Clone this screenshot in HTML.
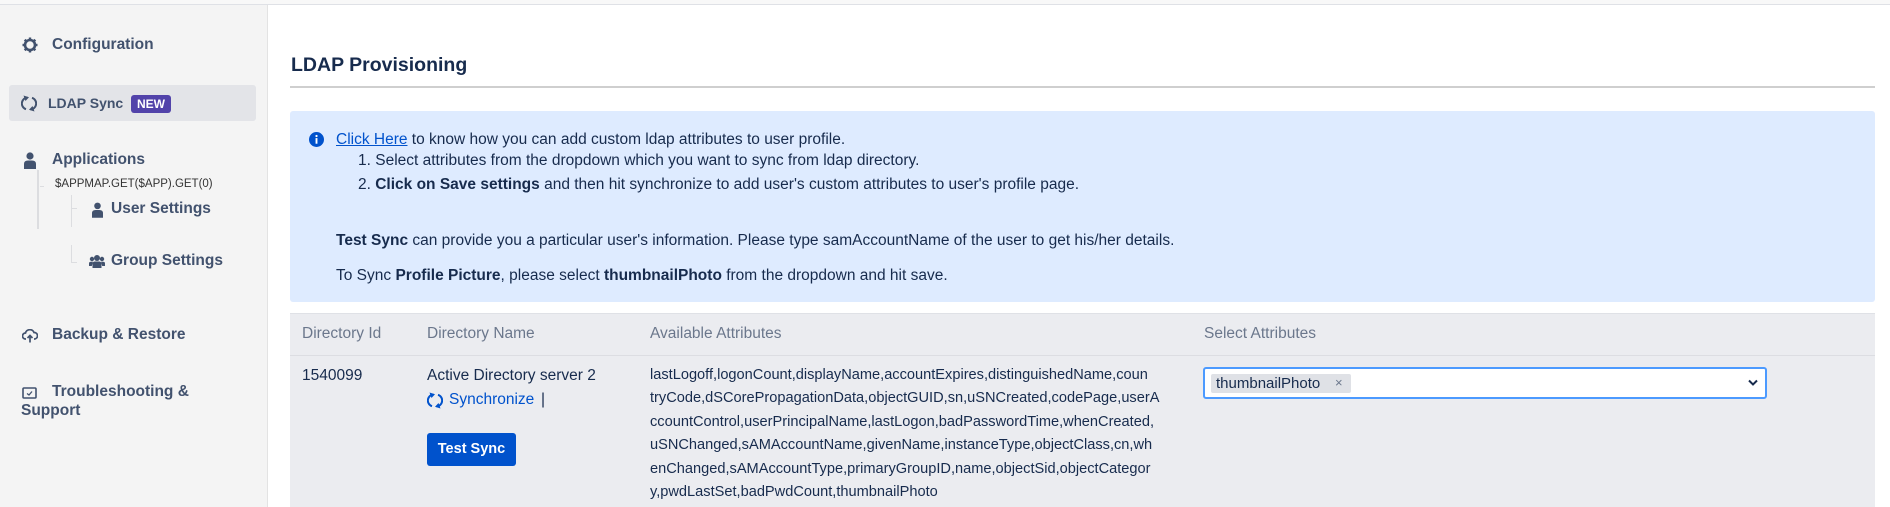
<!DOCTYPE html>
<html><head><meta charset="utf-8"><style>
*{margin:0;padding:0;box-sizing:border-box}
body{width:1890px;height:507px;overflow:hidden;background:#fff;font-family:"Liberation Sans",sans-serif;color:#172b4d;position:relative}
.a{position:absolute;white-space:nowrap}
.sb{position:absolute;left:0;top:0;width:268px;height:507px;background:#f4f4f4;border-right:1px solid #e3e3e3}
.top{position:absolute;left:0;top:0;width:1890px;height:5px;border-bottom:1px solid #dfe1e6;background:#f8f8f8}
.nav{font-weight:bold;font-size:15.5px;color:#42526e}
.ln{position:absolute;background:#dcdde0}
.t{font-size:15.5px;color:#172b4d}
.attr{font-size:14.6px;line-height:23.4px;color:#172b4d}
</style></head><body>
<div class="sb"></div>
<div class="top"></div>

<svg class="a" style="left:22px;top:37px" width="16" height="16" viewBox="0 0 16 16"><circle cx="8" cy="8" r="5" fill="none" stroke="#42526e" stroke-width="2.6"/><g stroke="#42526e" stroke-width="2.4"><line x1="8" y1="0.5" x2="8" y2="3"/><line x1="8" y1="13" x2="8" y2="15.5"/><line x1="0.5" y1="8" x2="3" y2="8"/><line x1="13" y1="8" x2="15.5" y2="8"/><line x1="2.7" y1="2.7" x2="4.4" y2="4.4"/><line x1="11.6" y1="11.6" x2="13.3" y2="13.3"/><line x1="2.7" y1="13.3" x2="4.4" y2="11.6"/><line x1="11.6" y1="4.4" x2="13.3" y2="2.7"/></g></svg>
<div class="a nav" style="left:52px;top:36px">Configuration</div>

<div class="a" style="left:9px;top:85px;width:247px;height:36px;background:#e3e4e8;border-radius:3px"></div>
<svg class="a" style="left:21px;top:95px" width="16" height="17" viewBox="0 0 16 17"><path d="M6.5 2.5 A6 6 0 0 0 5 14.2" fill="none" stroke="#42526e" stroke-width="2"/><path d="M9.5 14.5 A6 6 0 0 0 11 2.8" fill="none" stroke="#42526e" stroke-width="2"/><path d="M2.5 0.5 L8 2.3 L4.5 6Z" fill="#42526e"/><path d="M13.5 16.5 L8 14.7 L11.5 11Z" fill="#42526e"/></svg>
<div class="a nav" style="left:48px;top:95px;font-size:14px">LDAP Sync</div>
<div class="a" style="left:131px;top:95px;width:40px;height:18px;background:#5243aa;border-radius:3px;color:#fff;font-weight:bold;font-size:12px;line-height:18px;text-align:center">NEW</div>

<svg class="a" style="left:24px;top:152px" width="12" height="17" viewBox="0 0 12 17"><circle cx="6" cy="4" r="3.6" fill="#42526e"/><path d="M0 17 V12 Q0 8.5 4 8.5 H8 Q12 8.5 12 12 V17Z" fill="#42526e"/></svg>
<div class="a nav" style="left:52px;top:151px">Applications</div>
<div class="ln" style="left:37px;top:170px;width:2px;height:59px"></div>
<div class="ln" style="left:40px;top:186px;width:4px;height:1px"></div>
<div class="a" style="left:55px;top:178px;font-size:11.5px;color:#333">$APPMAP.GET($APP).GET(0)</div>
<div class="ln" style="left:71px;top:195px;width:1px;height:32px"></div>
<div class="ln" style="left:72px;top:208px;width:5px;height:1px"></div>
<svg class="a" style="left:92px;top:202px" width="11" height="16" viewBox="0 0 12 17"><circle cx="6" cy="4" r="3.6" fill="#42526e"/><path d="M0 17 V12 Q0 8.5 4 8.5 H8 Q12 8.5 12 12 V17Z" fill="#42526e"/></svg>
<div class="a nav" style="left:111px;top:200px">User Settings</div>
<div class="ln" style="left:71px;top:245px;width:1px;height:17px"></div>
<div class="ln" style="left:71px;top:262px;width:6px;height:1px"></div>
<svg class="a" style="left:89px;top:254px" width="16" height="14" viewBox="0 0 16 14"><circle cx="8" cy="4" r="3" fill="#42526e"/><circle cx="3" cy="5" r="2.2" fill="#42526e"/><circle cx="13" cy="5" r="2.2" fill="#42526e"/><path d="M3.5 14 V10 Q3.5 7.5 6 7.5 H10 Q12.5 7.5 12.5 10 V14Z" fill="#42526e"/><path d="M0 12 V9.5 Q0 7.8 2 7.8 H4 L2.8 12Z M16 12 V9.5 Q16 7.8 14 7.8 H12 L13.2 12Z" fill="#42526e"/></svg>
<div class="a nav" style="left:111px;top:252px">Group Settings</div>

<svg class="a" style="left:22px;top:329px" width="16" height="14" viewBox="0 0 16 14"><path d="M4 10 H3.5 A3 3 0 0 1 3.5 4 A4.5 4.5 0 0 1 12 3.5 A3.2 3.2 0 0 1 12.5 10 H12" fill="none" stroke="#42526e" stroke-width="1.7"/><path d="M8 13.5 V6.5 M5.5 9 L8 6.5 L10.5 9" fill="none" stroke="#42526e" stroke-width="1.7"/></svg>
<div class="a nav" style="left:52px;top:326px">Backup &amp; Restore</div>

<svg class="a" style="left:22px;top:387px" width="15" height="12" viewBox="0 0 15 12"><rect x="1" y="1" width="13" height="10" rx="1" fill="none" stroke="#42526e" stroke-width="1.6"/><path d="M5 6.5 L7 8 L10 4.5" fill="none" stroke="#42526e" stroke-width="1.3"/></svg>
<div class="a nav" style="left:52px;top:383px">Troubleshooting &amp;</div>
<div class="a nav" style="left:21px;top:402px">Support</div>

<div class="a" style="left:291px;top:54px;font-weight:bold;font-size:19.5px;color:#172b4d">LDAP Provisioning</div>
<div class="a" style="left:290px;top:86px;width:1585px;height:2px;background:#cfcfcf"></div>

<div class="a" style="left:290px;top:111px;width:1585px;height:191px;background:#deebff;border-radius:3px"></div>
<svg class="a" style="left:309px;top:132px" width="15" height="15" viewBox="0 0 16 16"><circle cx="8" cy="8" r="8" fill="#0052cc"/><rect x="7" y="6.5" width="2" height="6" fill="#fff"/><circle cx="8" cy="4.3" r="1.2" fill="#fff"/></svg>
<div class="a t" style="left:336px;top:131px"><span style="color:#0052cc;text-decoration:underline">Click Here</span> to know how you can add custom ldap attributes to user profile.</div>
<div class="a t" style="left:358px;top:152px">1. Select attributes from the dropdown which you want to sync from ldap directory.</div>
<div class="a t" style="left:358px;top:176px">2. <b>Click on Save settings</b> and then hit synchronize to add user's custom attributes to user's profile page.</div>
<div class="a t" style="left:336px;top:232px"><b>Test Sync</b> can provide you a particular user's information. Please type samAccountName of the user to get his/her details.</div>
<div class="a t" style="left:336px;top:267px">To Sync <b>Profile Picture</b>, please select <b>thumbnailPhoto</b> from the dropdown and hit save.</div>

<div class="a" style="left:290px;top:313px;width:1585px;height:194px;background:#ebecf0;border-top:1px solid #dfe1e6"></div>
<div class="a" style="left:290px;top:355px;width:1585px;height:1px;background:#dcdde2"></div>
<div class="a t" style="left:302px;top:325px;color:#6b778c">Directory Id</div>
<div class="a t" style="left:427px;top:325px;color:#6b778c">Directory Name</div>
<div class="a t" style="left:650px;top:325px;color:#6b778c">Available Attributes</div>
<div class="a t" style="left:1204px;top:325px;color:#6b778c">Select Attributes</div>

<div class="a t" style="left:302px;top:367px">1540099</div>
<div class="a t" style="left:427px;top:367px">Active Directory server 2</div>
<svg class="a" style="left:427px;top:392px" width="16" height="17" viewBox="0 0 16 17"><path d="M6.5 2.5 A6 6 0 0 0 5 14.2" fill="none" stroke="#0052cc" stroke-width="2"/><path d="M9.5 14.5 A6 6 0 0 0 11 2.8" fill="none" stroke="#0052cc" stroke-width="2"/><path d="M2.5 0.5 L8 2.3 L4.5 6Z" fill="#0052cc"/><path d="M13.5 16.5 L8 14.7 L11.5 11Z" fill="#0052cc"/></svg>
<div class="a t" style="left:449px;top:391px;color:#0052cc">Synchronize</div>
<div class="a t" style="left:541px;top:391px">|</div>
<div class="a" style="left:427px;top:433px;width:89px;height:33px;background:#0052cc;border-radius:3px;color:#fff;font-weight:bold;font-size:14.5px;line-height:33px;text-align:center">Test Sync</div>

<div class="a attr" style="left:650px;top:364px">lastLogoff,logonCount,displayName,accountExpires,distinguishedName,coun<br>tryCode,dSCorePropagationData,objectGUID,sn,uSNCreated,codePage,userA<br>ccountControl,userPrincipalName,lastLogon,badPasswordTime,whenCreated,<br>uSNChanged,sAMAccountName,givenName,instanceType,objectClass,cn,wh<br>enChanged,sAMAccountType,primaryGroupID,name,objectSid,objectCategor<br>y,pwdLastSet,badPwdCount,thumbnailPhoto</div>

<div class="a" style="left:1203px;top:367px;width:564px;height:32px;background:#fff;border:2px solid #4c9aff;border-radius:3px"></div>
<div class="a" style="left:1211px;top:374px;width:140px;height:19px;background:#dfe1e6;border-radius:2px"></div>
<div class="a" style="left:1216px;top:374px;font-size:15px;line-height:19px;color:#172b4d">thumbnailPhoto</div>
<div class="a" style="left:1335px;top:373px;font-size:13px;line-height:19px;color:#6b778c">×</div>
<svg class="a" style="left:1748px;top:379px" width="10" height="8" viewBox="0 0 10 8"><path d="M1 1.5 L5 5.5 L9 1.5" fill="none" stroke="#172b4d" stroke-width="2"/></svg>
</body></html>
